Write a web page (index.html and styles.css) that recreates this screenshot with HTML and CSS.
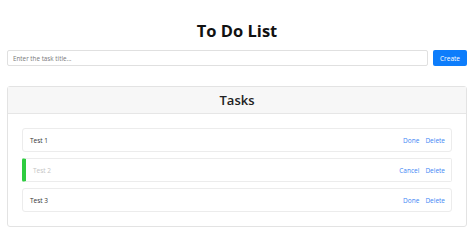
FILE: index.html
```html
<!DOCTYPE html>
<html>
<head>
<meta charset="utf-8">
<link rel="stylesheet" href="styles.css">
</head>
<body>
<h1 class="title">To Do List</h1>
<div class="new-task">
  <input class="task-input" type="text" placeholder="Enter the task title...">
  <button class="create-btn">Create</button>
</div>
<div class="card">
  <div class="card-header">Tasks</div>
  <div class="card-body">
    <div class="task">
      <span class="task-title">Test 1</span>
      <span class="actions"><a class="link">Done</a><a class="link">Delete</a></span>
    </div>
    <div class="task done">
      <span class="task-title">Test 2</span>
      <span class="actions"><a class="link">Cancel</a><a class="link">Delete</a></span>
    </div>
    <div class="task">
      <span class="task-title">Test 3</span>
      <span class="actions"><a class="link">Done</a><a class="link">Delete</a></span>
    </div>
  </div>
</div>
</body>
</html>
```
FILE: styles.css
```css
html, body {
  margin: 0;
  padding: 0;
  background: #fff;
}
body {
  padding: 0 7px;
  font-family: "Open Sans", "Noto Sans", sans-serif;
  color: #212529;
}
.title {
  margin: 20px 0 9px;
  height: 21px;
  line-height: 21px;
  font-size: 16.5px;
  font-weight: 700;
  text-align: center;
  color: #111;
}
.new-task {
  display: flex;
  gap: 5px;
  height: 16px;
}
.task-input {
  flex: 1;
  box-sizing: border-box;
  height: 16px;
  margin: 0;
  padding: 0 5px;
  border: 1px solid #e0e0e0;
  border-radius: 2px;
  font-family: inherit;
  font-size: 6.3px;
  outline: none;
}
.task-input::placeholder {
  color: #7a7a7a;
}
.create-btn {
  box-sizing: border-box;
  width: 34px;
  height: 16px;
  margin: 0;
  padding: 0;
  border: none;
  border-radius: 2px;
  background: #0d7dfb;
  color: #fff;
  font-family: inherit;
  font-size: 6.5px;
}
.card {
  margin-top: 20px;
  border: 1px solid #e3e3e3;
  border-radius: 3px;
}
.card-header {
  height: 26px;
  line-height: 26px;
  background: #f7f7f7;
  border-bottom: 1px solid #e6e6e6;
  text-align: center;
  font-size: 13px;
  font-weight: 600;
  color: #222;
}
.card-body {
  padding: 14px 14px 14px;
  display: flex;
  flex-direction: column;
  gap: 6px;
}
.task {
  box-sizing: border-box;
  height: 24px;
  display: flex;
  align-items: center;
  justify-content: space-between;
  padding: 0 6px 0 7px;
  border: 1px solid #ececec;
  border-radius: 3px;
  font-size: 6.5px;
}
.task-title {
  color: #333;
}
.task.done {
  border-left: 4px solid #2ecc40;
  border-radius: 2px;
}
.task.done .task-title {
  color: #c4c4c4;
}
.actions {
  display: flex;
  gap: 6px;
}
.link {
  color: #3d86f5;
  cursor: pointer;
}
```
